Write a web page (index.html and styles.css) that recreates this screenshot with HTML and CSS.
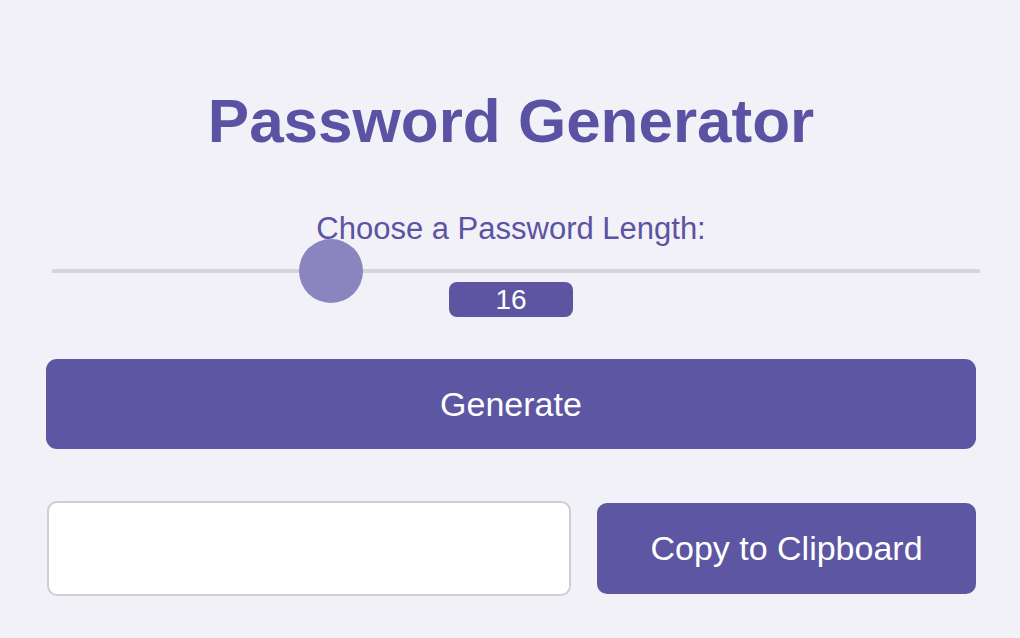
FILE: index.html
```html
<!DOCTYPE html>
<html lang="en">
<head>
<meta charset="utf-8">
<title>Password Generator</title>
<link rel="stylesheet" href="styles.css">
</head>
<body>
<main class="app">
  <h1 class="title">Password Generator</h1>
  <label class="length-label" for="length">Choose a Password Length:</label>
  <input class="slider" id="length" type="range" min="8" max="36" value="16">
  <div class="badge-row"><span class="badge">16</span></div>
  <button class="btn btn-generate" type="button">Generate</button>
  <div class="output-row">
    <input class="output" type="text" readonly>
    <button class="btn btn-copy" type="button">Copy to Clipboard</button>
  </div>
</main>
</body>
</html>
```
FILE: styles.css
```css
* { box-sizing: border-box; }
html, body {
  margin: 0;
  height: 100%;
  background: #f2f1f7;
}
body {
  font-family: "Liberation Sans", Arial, sans-serif;
  color: #5b53a3;
}
.app {
  display: flex;
  flex-direction: column;
  padding: 0 44px 0 46px;
}
.title {
  margin: 85px 0 0;
  font-size: 62px;
  line-height: 71px;
  font-weight: 700;
  text-align: center;
  color: #5b52a3;
}
.length-label {
  margin-top: 55px;
  font-size: 31px;
  line-height: 36px;
  text-align: center;
  color: #5b53a3;
}
.slider {
  -webkit-appearance: none;
  appearance: none;
  width: 928px;
  height: 4px;
  margin: 22px 0 0 6px;
  padding: 0;
  background: #d5d4da;
  border-radius: 2px;
  outline: none;
}
.slider::-webkit-slider-runnable-track {
  height: 4px;
  background: #d5d4da;
  border-radius: 2px;
}
.slider::-webkit-slider-thumb {
  -webkit-appearance: none;
  appearance: none;
  width: 64px;
  height: 64px;
  margin-top: -30px;
  border-radius: 50%;
  background: #8a84bf;
  border: none;
}
.badge-row {
  display: flex;
  justify-content: center;
  margin-top: 9px;
}
.badge {
  display: flex;
  align-items: center;
  justify-content: center;
  width: 124px;
  height: 35px;
  border-radius: 8px;
  background: #5d55a2;
  color: #fff;
  font-size: 28px;
  line-height: 1;
}
.btn {
  border: none;
  background: #5d56a2;
  color: #fff;
  font-family: "Liberation Sans", Arial, sans-serif;
  cursor: pointer;
}
.btn-generate {
  margin-top: 42px;
  height: 90px;
  border-radius: 11px;
  font-size: 34px;
}
.output-row {
  display: flex;
  align-items: center;
  gap: 26px;
  margin-top: 52px;
}
.output {
  width: 524px;
  height: 95px;
  background: #fff;
  border: 2px solid #cfcfd3;
  border-radius: 10px;
  margin-left: 1px;
}
.btn-copy {
  flex: 1;
  height: 91px;
  border-radius: 10px;
  font-size: 34px;
}
```
